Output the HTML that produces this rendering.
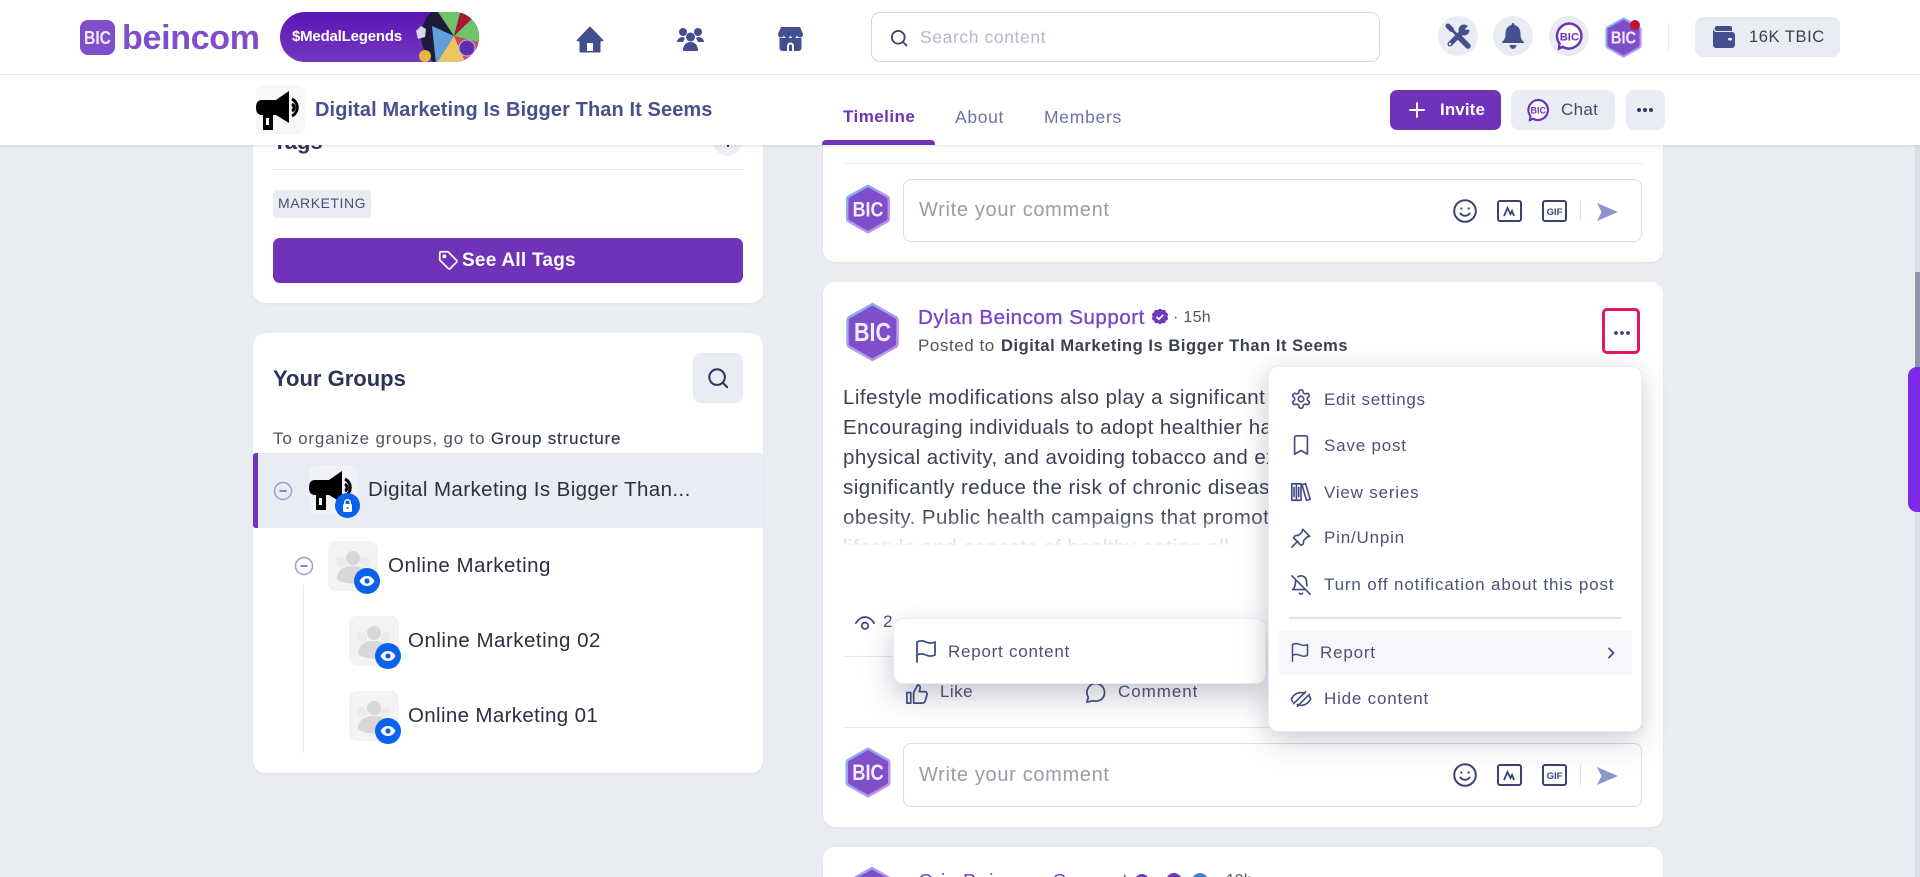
<!DOCTYPE html>
<html lang="en"><head><meta charset="utf-8"><title>Digital Marketing Is Bigger Than It Seems</title>
<style>
*{box-sizing:border-box}
html,body{margin:0;padding:0;width:1920px;height:877px;overflow:hidden;background:#e9ecf1}
#p{position:relative;width:1920px;height:877px;overflow:hidden;background:#e9ecf1;font-family:"Liberation Sans",sans-serif;color:#2b2f3f}
.a,.t,svg{position:absolute}
.t{white-space:nowrap;line-height:24px;height:24px}
.card{position:absolute;background:#fff;border-radius:12px;box-shadow:0 1px 2px rgba(40,50,90,.06)}
.btn{position:absolute;border-radius:8px;background:#eaecf4}
.box{position:absolute;left:903px;width:739px;height:64px;border:1px solid #dadce5;border-radius:8px;background:#fff}
.wc{left:919px;font-size:20px;letter-spacing:.67px;color:#9a9ca8}
.body{left:843px;font-size:20.5px;letter-spacing:.45px;color:#3c4156;line-height:30px;height:30px}
.m{font-size:17px;letter-spacing:.8px;color:#4b5278}
.g{font-size:20.5px;letter-spacing:.5px;color:#2b2f3f}
.i{fill:none;stroke:#434b85;stroke-width:1.8;stroke-linecap:round;stroke-linejoin:round}
</style></head><body><div id="p">

<!-- left column -->
<div class="card" style="left:253px;top:100px;width:510px;height:203px"></div>
<div class="t" style="left:273px;top:130px;font-size:22px;font-weight:700;color:#2b3458">Tags</div>
<div class="a" style="left:713px;top:127px;width:29px;height:29px;border-radius:50%;background:#eef0f5"></div>
<div class="a" style="left:727px;top:141px;width:2px;height:6px;background:#2f3762"></div>
<div class="a" style="left:273px;top:169px;width:470px;height:1px;background:#e8e9ee"></div>
<div class="a" style="left:273px;top:190px;width:98px;height:28px;border-radius:4px;background:#eaecf4"></div>
<div class="t" style="left:278px;top:191px;font-size:14px;letter-spacing:.53px;color:#474e70">MARKETING</div>
<div class="a" style="left:273px;top:238px;width:470px;height:45px;border-radius:7px;background:#6f32b8"></div>
<svg style="left:437px;top:249px" width="22" height="22" viewBox="0 0 24 24" fill="none" stroke="#fff" stroke-width="1.9" stroke-linejoin="round"><path d="M3 4.5A1.5 1.5 0 0 1 4.500 3H12l9.300 9.300a1.500 1.500 0 0 1 0 2.100l-6.900 6.900a1.500 1.500 0 0 1-2.100 0L3 12z"/><circle cx="8" cy="8" r="1.200" fill="#fff"/></svg>
<div class="t" style="left:462px;top:249px;font-size:19px;font-weight:700;letter-spacing:.25px;color:#fff">See All Tags</div>

<div class="card" style="left:253px;top:333px;width:510px;height:440px"></div>
<div class="t" style="left:273px;top:367px;font-size:22px;font-weight:700;color:#2b3458">Your Groups</div>
<div class="btn" style="left:693px;top:353px;width:50px;height:50px"></div>
<svg style="left:707px;top:367px" width="22" height="22" viewBox="0 0 24 24" fill="none" stroke="#2f3762" stroke-width="2.300" stroke-linecap="round"><circle cx="11" cy="11" r="8.500"/><path d="M17.500 17.500 22 22"/></svg>
<div class="t" style="left:273px;top:427px;font-size:17px;letter-spacing:.82px;color:#50545f">To organize groups, go to <span style="color:#343a4e;-webkit-text-stroke:.2px #343a4e">Group structure</span></div>
<div class="a" style="left:253px;top:453px;width:510px;height:75px;background:#eaecf4"></div>
<div class="a" style="left:253px;top:453px;width:5px;height:75px;background:#6f32b8;border-radius:3px 0 0 3px"></div>
<svg style="left:273px;top:481px" width="20" height="20" viewBox="0 0 20 20" fill="none" stroke="#9aa0cc" stroke-width="1.500"><circle cx="10" cy="10" r="8.500"/><path d="M6.500 10h7" stroke="#777da8" stroke-width="1.800"/></svg>
<svg style="left:309px;top:465px" width="49" height="49" viewBox="0 0 49 49"><rect width="49" height="49" rx="8" fill="#f1f2f6"/><path d="M6 15H20L33 6V38L20 30H6Q0 30 0 22.500 0 15 6 15Z"/><path d="M7 30H17V45H7Z"/><path d="M10 33h3v7h-3z" fill="#fff"/><path d="M36 14a9.500 9.500 0 0 1 0 17M36 19a4 4 0 0 1 0 7" fill="none" stroke="#000" stroke-width="3"/></svg>
<svg style="left:335px;top:493px" width="25" height="25" viewBox="0 0 25 25"><circle cx="12.500" cy="12.500" r="12.500" fill="#0b62ea"/><rect x="8" y="11" width="9" height="8" rx="1.200" fill="#fff"/><path d="M9.800 11V9.500a2.700 2.700 0 0 1 5.400 0V11" fill="none" stroke="#fff" stroke-width="1.500"/><circle cx="12.500" cy="15" r="1" fill="#0b62ea"/></svg>
<div class="t g" style="left:368px;top:478px;letter-spacing:.41px">Digital Marketing Is Bigger Than...</div>

<svg style="left:294px;top:556px" width="20" height="20" viewBox="0 0 20 20" fill="none" stroke="#9aa0cc" stroke-width="1.500"><circle cx="10" cy="10" r="8.500"/><path d="M6.500 10h7" stroke="#777da8" stroke-width="1.800"/></svg>
<div class="a" style="left:303px;top:585px;width:1px;height:168px;background:#e8e9ee"></div>

<svg style="left:328px;top:541px" width="50" height="50" viewBox="0 0 50 50"><rect width="50" height="50" rx="8" fill="#f3f3f4"/><circle cx="25" cy="17" r="7" fill="#d8d8da"/><path d="M9 38c0-9 7-13 16-13s16 4 16 13c-5 6-27 6-32 0z" fill="#d8d8da"/><circle cx="13" cy="21" r="5" fill="#ebebec"/><circle cx="37" cy="21" r="5" fill="#ebebec"/></svg>
<svg style="left:354px;top:568px" width="26" height="26" viewBox="0 0 26 26"><circle cx="13" cy="13" r="13" fill="#0b62ea"/><path d="M5.500 13c2-3.500 4.500-5 7.500-5s5.500 1.500 7.500 5c-2 3.500-4.500 5-7.500 5s-5.500-1.500-7.500-5z" fill="#fff"/><circle cx="13" cy="13" r="2.600" fill="#0b62ea"/></svg>
<div class="t g" style="left:388px;top:554px">Online Marketing</div>

<svg style="left:349px;top:616px" width="50" height="50" viewBox="0 0 50 50"><rect width="50" height="50" rx="8" fill="#f3f3f4"/><circle cx="25" cy="17" r="7" fill="#d8d8da"/><path d="M9 38c0-9 7-13 16-13s16 4 16 13c-5 6-27 6-32 0z" fill="#d8d8da"/><circle cx="13" cy="21" r="5" fill="#ebebec"/><circle cx="37" cy="21" r="5" fill="#ebebec"/></svg>
<svg style="left:375px;top:643px" width="26" height="26" viewBox="0 0 26 26"><circle cx="13" cy="13" r="13" fill="#0b62ea"/><path d="M5.500 13c2-3.500 4.500-5 7.500-5s5.500 1.500 7.500 5c-2 3.500-4.500 5-7.500 5s-5.500-1.500-7.500-5z" fill="#fff"/><circle cx="13" cy="13" r="2.600" fill="#0b62ea"/></svg>
<div class="t g" style="left:408px;top:629px">Online Marketing 02</div>

<svg style="left:349px;top:691px" width="50" height="50" viewBox="0 0 50 50"><rect width="50" height="50" rx="8" fill="#f3f3f4"/><circle cx="25" cy="17" r="7" fill="#d8d8da"/><path d="M9 38c0-9 7-13 16-13s16 4 16 13c-5 6-27 6-32 0z" fill="#d8d8da"/><circle cx="13" cy="21" r="5" fill="#ebebec"/><circle cx="37" cy="21" r="5" fill="#ebebec"/></svg>
<svg style="left:375px;top:718px" width="26" height="26" viewBox="0 0 26 26"><circle cx="13" cy="13" r="13" fill="#0b62ea"/><path d="M5.500 13c2-3.500 4.500-5 7.500-5s5.500 1.500 7.500 5c-2 3.500-4.500 5-7.500 5s-5.500-1.500-7.500-5z" fill="#fff"/><circle cx="13" cy="13" r="2.600" fill="#0b62ea"/></svg>
<div class="t g" style="left:408px;top:704px;letter-spacing:.35px">Online Marketing 01</div>

<!-- top post remainder -->
<div class="card" style="left:823px;top:100px;width:840px;height:162px"></div>
<div class="a" style="left:843px;top:163px;width:800px;height:1px;background:#e8e9ee"></div>
<svg style="left:845px;top:184px" width="46" height="50" viewBox="0 0 54 60"><defs><linearGradient id="h1" x1="0" y1="0" x2="1" y2="1"><stop offset="0" stop-color="#7db4f0"/><stop offset="1" stop-color="#d38ae6"/></linearGradient></defs><path d="M27 2 50 15Q52 16 52 19V41Q52 44 50 45L27 58 4 45Q2 44 2 41V19Q2 16 4 15Z" fill="#7f4ecb" stroke="url(#h1)" stroke-width="3"/><text x="27" y="39" text-anchor="middle" font-family="Liberation Sans" font-weight="700" font-size="26" textLength="37" lengthAdjust="spacingAndGlyphs" fill="#f2ecfb">BIC</text></svg>
<div class="box" style="top:179px;height:63px"></div>
<div class="t wc" style="top:198px">Write your comment</div>
<svg style="left:1453px;top:199px" width="24" height="24" viewBox="0 0 24 24" fill="none" stroke="#3b4274" stroke-width="2"><circle cx="12" cy="12" r="10.800"/><circle cx="8.300" cy="9.500" r="1.100" fill="#3b4274" stroke="none"/><circle cx="15.700" cy="9.500" r="1.100" fill="#3b4274" stroke="none"/><path d="M7.500 14.500c2 3 7 3 9 0" stroke-linecap="round"/></svg>
<svg style="left:1497px;top:200px" width="25" height="22" viewBox="0 0 25 22" fill="none" stroke="#3b4274" stroke-width="2"><rect x="1" y="1" width="23" height="20" rx="2"/><path d="M7 16l3.500-8 3 6 1.500-3 2 5" stroke-width="1.800"/></svg>
<svg style="left:1542px;top:200px" width="25" height="22" viewBox="0 0 25 22"><rect x="1" y="1" width="23" height="20" rx="2" fill="none" stroke="#3b4274" stroke-width="2"/><text x="12.500" y="15" text-anchor="middle" font-family="Liberation Sans" font-weight="700" font-size="9.500" fill="#3b4274">GIF</text></svg>
<div class="a" style="left:1580px;top:201px;width:1px;height:20px;background:#dfe0e7"></div>
<svg style="left:1597px;top:203px" width="21" height="18" viewBox="0 0 21 18"><path d="M0 0 21 9 0 18 4.500 9Z" fill="#8e94c9"/></svg>

<!-- main post -->
<div class="card" style="left:823px;top:282px;width:840px;height:545px"></div>
<svg style="left:845px;top:302px" width="55" height="60" viewBox="0 0 54 60"><path d="M27 2 50 15Q52 16 52 19V41Q52 44 50 45L27 58 4 45Q2 44 2 41V19Q2 16 4 15Z" fill="#7f4ecb" stroke="url(#h1)" stroke-width="2.500"/><text x="27" y="39" text-anchor="middle" font-family="Liberation Sans" font-weight="700" font-size="26" textLength="37" lengthAdjust="spacingAndGlyphs" fill="#f2ecfb">BIC</text></svg>
<div class="t" style="left:918px;top:306px;font-size:20.5px;letter-spacing:.55px;color:#7a44c8;-webkit-text-stroke:.35px #7a44c8">Dylan Beincom Support</div>
<svg style="left:1151px;top:308px" width="18" height="18" viewBox="0 0 18 18"><path d="M9 .5l2.300 1.500 2.700-.2 1 2.500 2.200 1.600-.8 2.600.8 2.600-2.200 1.600-1 2.500-2.700-.2L9 16.500l-2.300-1.500-2.700.2-1-2.500L.8 11.100l.8-2.600-.8-2.600L3 4.300l1-2.500 2.700.2z" fill="#6f39bd"/><path d="M5.500 8.800l2.400 2.400 4.400-4.400" fill="none" stroke="#fff" stroke-width="1.700"/></svg>
<div class="t" style="left:1173px;top:306px;font-size:16px;letter-spacing:.3px;color:#50545f">· 15h</div>
<div class="t" style="left:918px;top:334px;font-size:17px;letter-spacing:.55px;color:#50545f">Posted to</div>
<div class="t" style="left:1001px;top:334px;font-size:16.500px;font-weight:700;letter-spacing:.55px;color:#3a3f52">Digital Marketing Is Bigger Than It Seems</div>
<div class="a" style="left:1602px;top:308px;width:38px;height:46px;border:3px solid #e6155f;border-radius:5px;background:#fff"></div>
<svg style="left:1613px;top:330px" width="18" height="6" viewBox="0 0 18 6" fill="#3b4274"><circle cx="3" cy="3" r="1.900"/><circle cx="9" cy="3" r="1.900"/><circle cx="15" cy="3" r="1.900"/></svg>

<div class="a" style="left:843px;top:383px;width:425px;height:162px;overflow:hidden">
<div class="t body" style="left:0;top:0">Lifestyle modifications also play a significant role in prevention.</div>
<div class="t body" style="left:0;top:30px">Encouraging individuals to adopt healthier habits, such as regular</div>
<div class="t body" style="left:0;top:60px">physical activity, and avoiding tobacco and excessive alcohol, can</div>
<div class="t body" style="left:0;top:90px">significantly reduce the risk of chronic diseases such as diabetes</div>
<div class="t body" style="left:0;top:120px">obesity. Public health campaigns that promote awareness of these</div>
<div class="t body" style="left:0;top:150px">lifestyle and aspects of healthy eating all</div>
<div class="a" style="left:0;top:128px;width:425px;height:34px;background:linear-gradient(rgba(255,255,255,0),rgba(255,255,255,.2) 35%,rgba(255,255,255,.75) 75%,rgba(255,255,255,.92))"></div>
</div>

<svg style="left:854px;top:612px" width="22" height="22" viewBox="0 0 24 24" fill="none" stroke="#434b85" stroke-width="2" stroke-linecap="round"><path d="M2 12C5 7.500 8.500 5.500 12 5.500S19 7.500 22 12"/><circle cx="12" cy="15" r="3.500"/></svg>
<div class="t" style="left:883px;top:610px;font-size:17px;color:#4b5278">2</div>
<div class="a" style="left:843px;top:656px;width:800px;height:1px;background:#e8e9ee"></div>
<svg style="left:905px;top:682px" width="23" height="23" viewBox="0 0 24 24" class="i"><path d="M2 11h4v11H2zM9 22h9c1.500 0 2.500-1 3-2l2-7c.300-1.500-.7-3-2.500-3H15l.800-4c.200-1.500-1-3-2.500-3L9 11z"/></svg>
<div class="t m" style="left:940px;top:680px;letter-spacing:.45px">Like</div>
<svg style="left:1084px;top:681px" width="23" height="23" viewBox="0 0 24 24" class="i"><path d="M12 2.500a9.500 9.500 0 0 1 6.500 16.400c-2 1.900-6.500 2.600-9 1.800L3 22l1.500-5A9.500 9.500 0 0 1 12 2.500z"/></svg>
<div class="t m" style="left:1118px;top:680px;letter-spacing:.95px">Comment</div>
<div class="a" style="left:843px;top:727px;width:800px;height:1px;background:#e8e9ee"></div>

<svg style="left:845px;top:747px" width="46" height="51" viewBox="0 0 54 60"><path d="M27 2 50 15Q52 16 52 19V41Q52 44 50 45L27 58 4 45Q2 44 2 41V19Q2 16 4 15Z" fill="#7f4ecb" stroke="url(#h1)" stroke-width="3"/><text x="27" y="39" text-anchor="middle" font-family="Liberation Sans" font-weight="700" font-size="26" textLength="37" lengthAdjust="spacingAndGlyphs" fill="#f2ecfb">BIC</text></svg>
<div class="box" style="top:743px"></div>
<div class="t wc" style="top:763px">Write your comment</div>
<svg style="left:1453px;top:763px" width="24" height="24" viewBox="0 0 24 24" fill="none" stroke="#3b4274" stroke-width="2"><circle cx="12" cy="12" r="10.800"/><circle cx="8.300" cy="9.500" r="1.100" fill="#3b4274" stroke="none"/><circle cx="15.700" cy="9.500" r="1.100" fill="#3b4274" stroke="none"/><path d="M7.500 14.500c2 3 7 3 9 0" stroke-linecap="round"/></svg>
<svg style="left:1497px;top:764px" width="25" height="22" viewBox="0 0 25 22" fill="none" stroke="#3b4274" stroke-width="2"><rect x="1" y="1" width="23" height="20" rx="2"/><path d="M7 16l3.500-8 3 6 1.500-3 2 5" stroke-width="1.800"/></svg>
<svg style="left:1542px;top:764px" width="25" height="22" viewBox="0 0 25 22"><rect x="1" y="1" width="23" height="20" rx="2" fill="none" stroke="#3b4274" stroke-width="2"/><text x="12.500" y="15" text-anchor="middle" font-family="Liberation Sans" font-weight="700" font-size="9.500" fill="#3b4274">GIF</text></svg>
<div class="a" style="left:1580px;top:765px;width:1px;height:20px;background:#dfe0e7"></div>
<svg style="left:1597px;top:767px" width="21" height="18" viewBox="0 0 21 18"><path d="M0 0 21 9 0 18 4.500 9Z" fill="#8e94c9"/></svg>

<!-- next post (cut by the viewport) -->
<div class="card" style="left:823px;top:847px;width:840px;height:30px;border-radius:12px 12px 0 0"></div>
<svg style="left:823px;top:847px" width="840" height="30" viewBox="0 0 840 30"><path d="M49 21 72 34H26Z" fill="#7f4ecb" stroke="url(#h1)" stroke-width="2.500"/><text x="95" y="41" font-family="Liberation Sans" font-size="20.500" letter-spacing=".55" fill="#7a44c8">Cris Beincom Support</text><circle cx="319" cy="34" r="7" fill="#6f39bd"/><circle cx="351" cy="34" r="8" fill="#6f39bd"/><circle cx="377" cy="34" r="8" fill="#3f7fd8"/><text x="403" y="38" font-family="Liberation Sans" font-size="16" fill="#50545f">19h</text></svg>

<!-- scrollbar -->
<div class="a" style="left:1915px;top:145px;width:5px;height:732px;background:#dcdee6"></div>
<div class="a" style="left:1915px;top:272px;width:5px;height:240px;background:#8f95a9"></div>
<div class="a" style="left:1908px;top:367px;width:12px;height:145px;background:#7b2be8;border-radius:9px 0 0 9px"></div>

<!-- report popup -->
<div class="a" style="left:893px;top:618px;width:373px;height:66px;background:#fff;border-radius:10px;border:1px solid #eceef4;box-shadow:0 12px 28px rgba(40,45,80,.26)"></div>
<svg style="left:914px;top:639px" width="24" height="24" viewBox="0 0 24 24" class="i"><path d="M3 23V3c3-1.500 6-1.500 9 0s6 1.500 9 0v13c-3 1.500-6 1.500-9 0s-6-1.500-9 0"/></svg>
<div class="t m" style="left:948px;top:640px;letter-spacing:.75px">Report content</div>

<!-- dropdown -->
<div class="a" style="left:1268px;top:366px;width:374px;height:366px;background:#fff;border-radius:10px;border:1px solid #e9ebf1;box-shadow:0 10px 30px rgba(40,45,80,.2),-6px 0 20px rgba(40,45,80,.05)"></div>
<svg style="left:1290px;top:388px" width="22" height="22" viewBox="0 0 24 24" class="i"><path d="M12.220 2h-.44a2 2 0 0 0-2 2v.18a2 2 0 0 1-1 1.730l-.43.25a2 2 0 0 1-2 0l-.15-.08a2 2 0 0 0-2.730.73l-.22.38a2 2 0 0 0 .73 2.730l.15.1a2 2 0 0 1 1 1.720v.51a2 2 0 0 1-1 1.740l-.15.09a2 2 0 0 0-.73 2.730l.22.38a2 2 0 0 0 2.730.73l.15-.08a2 2 0 0 1 2 0l.43.25a2 2 0 0 1 1 1.730V20a2 2 0 0 0 2 2h.44a2 2 0 0 0 2-2v-.18a2 2 0 0 1 1-1.730l.43-.25a2 2 0 0 1 2 0l.15.08a2 2 0 0 0 2.730-.73l.22-.39a2 2 0 0 0-.73-2.730l-.15-.08a2 2 0 0 1-1-1.740v-.5a2 2 0 0 1 1-1.740l.15-.09a2 2 0 0 0 .73-2.730l-.22-.38a2 2 0 0 0-2.730-.73l-.15.08a2 2 0 0 1-2 0l-.43-.25a2 2 0 0 1-1-1.730V4a2 2 0 0 0-2-2z"/><circle cx="12" cy="12" r="3"/></svg>
<div class="t m" style="left:1324px;top:388px;letter-spacing:.7px">Edit settings</div>
<svg style="left:1290px;top:434px" width="22" height="22" viewBox="0 0 24 24" class="i"><path d="M19 22l-7-4-7 4V4a2 2 0 0 1 2-2h10a2 2 0 0 1 2 2z"/></svg>
<div class="t m" style="left:1324px;top:434px">Save post</div>
<svg style="left:1290px;top:481px" width="22" height="22" viewBox="0 0 24 24" class="i"><path d="M2 3h5v18H2zM7 3h5v18H7zM4.500 7v10M9.500 7v10M13 4l4-1 5 17-4 1z"/></svg>
<div class="t m" style="left:1324px;top:481px">View series</div>
<svg style="left:1290px;top:527px" width="22" height="22" viewBox="0 0 24 24" class="i"><path d="M14 2.500l7.500 7.500-3 1-3.500 3.500-.5 4-2.500 1.500-8-8 1.500-2.500 4-.5L13 5.500zM8.500 15.500 2 22"/></svg>
<div class="t m" style="left:1324px;top:526px">Pin/Unpin</div>
<svg style="left:1290px;top:574px" width="22" height="22" viewBox="0 0 24 24" class="i"><path d="M8.700 3A6 6 0 0 1 18 8a21.300 21.300 0 0 0 .6 5M17 17H3s3-2 3-9a4.670 4.670 0 0 1 .3-1.700M10.300 21a1.940 1.940 0 0 0 3.400 0M2 2l20 20"/></svg>
<div class="t m" style="left:1324px;top:573px;letter-spacing:.85px">Turn off notification about this post</div>
<div class="a" style="left:1289px;top:617px;width:332px;height:2px;background:#e1e3ec"></div>
<div class="a" style="left:1279px;top:630px;width:353px;height:45px;background:#f7f7fb;border-radius:3px"></div>
<svg style="left:1290px;top:641px" width="20" height="22" viewBox="0 0 24 24" class="i"><path d="M3 23V3c3-1.500 6-1.500 9 0s6 1.500 9 0v13c-3 1.500-6 1.500-9 0s-6-1.500-9 0"/></svg>
<div class="t m" style="left:1320px;top:641px">Report</div>
<svg style="left:1606px;top:647px" width="10" height="12" viewBox="0 0 10 12" class="i"><path d="M3 1.500 7.500 6 3 10.500"/></svg>
<svg style="left:1290px;top:688px" width="22" height="22" viewBox="0 0 24 24" class="i"><path d="M3 15c-1-1-1.500-2-1.500-3C4 7.500 8 5 12 5c1.500 0 3 .3 4 1M21 9c1 1 1.500 2 1.500 3-2.500 4.500-6.500 7-10.500 7-1.500 0-3-.3-4-1M4 17 17 4M8 20 21 7"/></svg>
<div class="t m" style="left:1324px;top:687px">Hide content</div>

<!-- sub header -->
<div class="a" style="left:0;top:75px;width:1920px;height:70px;background:#fff;box-shadow:0 1px 3px rgba(50,55,90,.14)"></div>
<svg style="left:256px;top:85px" width="49" height="49" viewBox="0 0 49 49"><rect width="49" height="49" rx="8" fill="#f7f7f9"/><path d="M6 15H20L33 6V38L20 30H6Q0 30 0 22.500 0 15 6 15Z"/><path d="M7 30H17V45H7Z"/><path d="M10 33h3v7h-3z" fill="#fff"/><path d="M36 14a9.500 9.500 0 0 1 0 17M36 19a4 4 0 0 1 0 7" fill="none" stroke="#000" stroke-width="3"/></svg>
<div class="t" style="left:315px;top:98px;font-size:20px;font-weight:700;letter-spacing:.1px;color:#46518c">Digital Marketing Is Bigger Than It Seems</div>
<div class="t" style="left:843px;top:105px;font-size:17px;font-weight:700;letter-spacing:.45px;color:#6f32b8">Timeline</div>
<div class="t" style="left:955px;top:105px;font-size:17.500px;letter-spacing:.65px;color:#6b73a6">About</div>
<div class="t" style="left:1044px;top:105px;font-size:17.500px;letter-spacing:.73px;color:#6b73a6">Members</div>
<div class="a" style="left:822px;top:140px;width:113px;height:5px;background:#6f32b8;border-radius:4px 4px 0 0"></div>

<div class="a" style="left:1390px;top:90px;width:111px;height:40px;border-radius:7px;background:#6f32b8"></div>
<svg style="left:1409px;top:102px" width="16" height="16" viewBox="0 0 16 16" stroke="#fff" stroke-width="2" stroke-linecap="round"><path d="M8 1v14M1 8h14"/></svg>
<div class="t" style="left:1440px;top:98px;font-size:17px;font-weight:700;letter-spacing:.1px;color:#fff">Invite</div>
<div class="btn" style="left:1511px;top:90px;width:104px;height:40px"></div>
<svg style="left:1526px;top:98px" width="24" height="24" viewBox="0 0 24 24"><path d="M12 2a10 10 0 1 1-5 18.700L4 22l.4-4A10 10 0 0 1 12 2z" fill="#fff" stroke="#6f32b8" stroke-width="2.200"/><text x="12.300" y="15.500" text-anchor="middle" font-family="Liberation Sans" font-weight="700" font-size="9" fill="#6f32b8">BIC</text></svg>
<div class="t" style="left:1561px;top:98px;font-size:17px;letter-spacing:.3px;color:#434b6b">Chat</div>
<div class="btn" style="left:1626px;top:90px;width:39px;height:40px"></div>
<svg style="left:1636px;top:107px" width="18" height="6" viewBox="0 0 18 6" fill="#2f3762"><circle cx="3" cy="3" r="2"/><circle cx="9" cy="3" r="2"/><circle cx="15" cy="3" r="2"/></svg>

<!-- top header -->
<div class="a" style="left:0;top:0;width:1920px;height:75px;background:#fff;border-bottom:1px solid #e4e5ea"></div>
<div class="a" style="left:80px;top:20px;width:35px;height:35px;border-radius:8px;background:#7f4ecb"></div>
<svg style="left:80px;top:20px" width="35" height="35" viewBox="0 0 35 35"><text x="17.500" y="24" text-anchor="middle" font-family="Liberation Sans" font-weight="700" font-size="18" textLength="27" lengthAdjust="spacingAndGlyphs" fill="#efe8fb">BIC</text></svg>
<div class="t" style="left:122px;top:18px;height:40px;line-height:40px;font-size:34px;font-weight:700;letter-spacing:-.3px;color:#7f4ecb">beincom</div>

<svg style="left:280px;top:12px" width="199" height="50" viewBox="0 0 199 50"><defs><linearGradient id="bn" x1="0" y1="0" x2="0" y2="1"><stop offset="0" stop-color="#5a14b4"/><stop offset="1" stop-color="#7538c0"/></linearGradient><clipPath id="pl"><rect width="199" height="50" rx="25"/></clipPath></defs><g clip-path="url(#pl)"><rect width="199" height="50" fill="url(#bn)"/>
<circle cx="174" cy="24" r="33" fill="#1f1a3c"/>
<path d="M174 24 158 0 182-6Z" fill="#6fc46a"/><path d="M174 24 182-6 199 0Z" fill="#a81732"/><path d="M174 24 199 0 205 32Z" fill="#6fc46a"/><path d="M174 24 205 32 188 56Z" fill="#d64259"/><path d="M174 24 188 56 156 52Z" fill="#edc560"/><path d="M174 24 156 52 152 14Z" fill="#5f9fdb"/>
<circle cx="187" cy="36" r="8" fill="#5f2db0" stroke="#c9b4ef" stroke-width="1"/><circle cx="145" cy="44" r="6" fill="#e6b43f"/><path d="M136 19l5-5 5 3-1 8-7 2z" fill="#d8d6e4"/></g>
<text x="12" y="29" font-family="Liberation Sans" font-weight="700" font-size="15" letter-spacing="-.2" fill="#fff">$MedalLegends</text></svg>

<svg style="left:576px;top:26px" width="28" height="27" viewBox="0 0 28 27"><path d="M14 1 27 14.500 24 15V26H4V15L1 14.500Z" fill="#434f8f" stroke="#434f8f" stroke-linejoin="round"/><rect x="11" y="17" width="6" height="8" fill="#fff"/></svg>
<svg style="left:676px;top:27px" width="29" height="24" viewBox="0 0 29 24" fill="#434f8f"><circle cx="7" cy="5" r="4"/><circle cx="22" cy="5" r="4"/><circle cx="14.500" cy="10" r="4.500"/><path d="M1 15c0-3 3-5 6-5l2 1-2 4zM28 15c0-3-3-5-6-5l-2 1 2 4zM7 24c0-6 3-9 7.500-9s7.500 3 7.500 9z"/></svg>
<svg style="left:778px;top:27px" width="25" height="24" viewBox="0 0 25 24" fill="#434f8f"><path d="M3 0h19l3 7a3 3 0 0 1-6 1 3 3 0 0 1-6.500 0A3 3 0 0 1 6 8 3 3 0 0 1 0 7z"/><path d="M1.500 11H23.500V21a3 3 0 0 1-3 3H4.500a3 3 0 0 1-3-3z"/><path d="M9 24v-5a3.500 3.500 0 0 1 7 0v5h-2v-5a1.500 1.500 0 0 0-3 0v5z" fill="#fff"/></svg>

<div class="a" style="left:871px;top:12px;width:509px;height:50px;border:1px solid #d4d6de;border-radius:9px;background:#fff"></div>
<svg style="left:890px;top:29px" width="18" height="18" viewBox="0 0 24 24" fill="none" stroke="#3e466e" stroke-width="2.500" stroke-linecap="round"><circle cx="11" cy="11" r="8.500"/><path d="M17.500 17.500 22 22"/></svg>
<div class="t" style="left:920px;top:25px;font-size:17.500px;letter-spacing:.6px;color:#b5b8cb">Search content</div>

<div class="a" style="left:1438px;top:16px;width:40px;height:40px;border-radius:50%;background:#eaecf4"></div>
<svg style="left:1445px;top:23px" width="26" height="26" viewBox="0 0 26 26" fill="none" stroke="#434f8f" stroke-linecap="round"><path d="M3 3l3.500 3.500" stroke-width="5"/><path d="M6 6l9 9" stroke-width="2.800"/><path d="M15 15l8 8" stroke-width="5.500"/><path d="M5 21 17 9" stroke-width="5"/><circle cx="19" cy="7" r="5.500" fill="#434f8f" stroke="none"/><path d="M19.500 6.500 26 0v7z" fill="#eaecf4" stroke="none"/><circle cx="5" cy="21" r="1.200" fill="#eaecf4" stroke="none"/></svg>
<div class="a" style="left:1493px;top:16px;width:40px;height:40px;border-radius:50%;background:#eaecf4"></div>
<svg style="left:1502px;top:23px" width="22" height="26" viewBox="0 0 22 26" fill="#434f8f"><path d="M11 0c1 0 1.500 1 1.500 2C17 3 18.500 7 18.500 11c0 4 1 6 3.500 8v1H0v-1c2.500-2 3.500-4 3.500-8S5 3 9.500 2C9.500 1 10 0 11 0z"/><path d="M7.500 22h7c-.5 2.500-2 4-3.500 4s-3-1.500-3.500-4z"/></svg>
<div class="a" style="left:1549px;top:16px;width:40px;height:40px;border-radius:50%;background:#eaecf4"></div>
<svg style="left:1554px;top:21px" width="30" height="30" viewBox="0 0 24 24"><path d="M12 2a10 10 0 1 1-5 18.700L4 22l.4-4A10 10 0 0 1 12 2z" fill="#fff" stroke="#6f32b8" stroke-width="2"/><text x="12.300" y="15.500" text-anchor="middle" font-family="Liberation Sans" font-weight="700" font-size="9" fill="#6f32b8">BIC</text></svg>
<svg style="left:1604px;top:17px" width="39" height="41" viewBox="0 0 54 60"><path d="M27 2 50 15Q52 16 52 19V41Q52 44 50 45L27 58 4 45Q2 44 2 41V19Q2 16 4 15Z" fill="#7f4ecb" stroke="url(#h1)" stroke-width="3"/><text x="27" y="39" text-anchor="middle" font-family="Liberation Sans" font-weight="700" font-size="26" textLength="37" lengthAdjust="spacingAndGlyphs" fill="#f2ecfb">BIC</text></svg>
<div class="a" style="left:1630px;top:20px;width:10px;height:10px;border-radius:50%;background:#c1122f"></div>
<div class="a" style="left:1668px;top:23px;width:1px;height:29px;background:#e8e9ee"></div>
<div class="btn" style="left:1695px;top:17px;width:145px;height:40px"></div>
<svg style="left:1713px;top:26px" width="22" height="22" viewBox="0 0 22 22" fill="#434f8f"><path d="M3 0h14a2 2 0 0 1 2 2v3H3a3 3 0 0 1 0-5z"/><path d="M0 3c1 2 2 3 3 3h16a3 3 0 0 1 3 3v10a3 3 0 0 1-3 3H3a3 3 0 0 1-3-3z"/><rect x="15" y="12" width="4" height="2.500" rx="1" fill="#eaecf4"/></svg>
<div class="t" style="left:1749px;top:25px;font-size:16.500px;letter-spacing:.56px;color:#3a3f55">16K TBIC</div>

</div></body></html>
